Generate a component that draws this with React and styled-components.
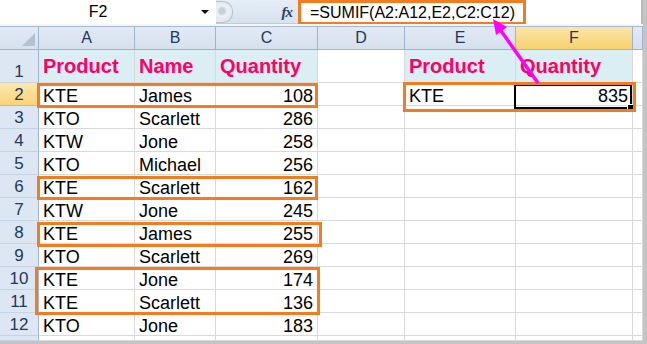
import React from "react";
import styled, { createGlobalStyle, css } from "styled-components";

const GlobalStyle = createGlobalStyle`
  html, body {
    margin: 0;
    padding: 0;
    background: #c4c4c4;
  }
  body {
    font-family: "Liberation Sans", Arial, sans-serif;
  }
`;

const Frame = styled.div`
  position: relative;
  width: 643px;
  height: 341px;
  background: #fff;
  display: flex;
  flex-direction: column;
  overflow: hidden;
`;

/* formula bar */
const FormulaBar = styled.div`
  display: grid;
  grid-template-columns: 216px 82px 1fr;
  height: 24px;
  box-sizing: border-box;
  border-bottom: 1px solid #c3cbd6;
  background: linear-gradient(#e6edf7, #d7e2f0);
`;

const NameBox = styled.div`
  position: relative;
  display: flex;
  align-items: center;
  justify-content: center;
  padding-right: 20px;
  background: #fff;
  font-size: 16px;
  color: #000;
  &::after {
    content: "";
    position: absolute;
    right: 7px;
    top: 10px;
    border-left: 4px solid transparent;
    border-right: 4px solid transparent;
    border-top: 4px solid #000;
  }
`;

const Grip = styled.div`
  display: flex;
  align-items: center;
  justify-content: space-between;
  padding-right: 6px;
`;

const Knob = styled.span`
  width: 18px;
  height: 20px;
  margin-left: -2px;
  border-radius: 0 10px 10px 0;
  border: 1px solid #b6c2d2;
  border-left: none;
  background: radial-gradient(circle at 8px 9px, #c9d0d9 0 3px, #eef2f7 5px, #e2e8f0 10px);
`;

const Fx = styled.span`
  font-family: "Liberation Serif", "Times New Roman", serif;
  font-style: italic;
  font-weight: bold;
  font-size: 15px;
  color: #2d3f57;
  letter-spacing: -1px;
`;

const FormulaField = styled.div`
  background: #fff;
  border-right: 2px solid #b9b9b9;
`;

const FormulaText = styled.span`
  display: inline-flex;
  align-items: center;
  box-sizing: border-box;
  width: 228px;
  height: 24px;
  padding-left: 9px;
  border: 3px solid #f47b20;
  border-bottom-width: 2px;
  font-size: 16px;
  color: #000;
`;

const Strip = styled.div`
  height: 2px;
  background: #f3f5f9;
  border-bottom: 1px solid #a9b9cd;
`;

/* sheet grid */
const Sheet = styled.div`
  flex: 1;
  display: grid;
  grid-template-columns: 39px 96px 81px 102px 87px 111px 117px 1fr;
  grid-template-rows: 23px 33px repeat(11, 23px) 1fr;
`;

const place = css`
  grid-column: ${(p) => p.$c};
  grid-row: ${(p) => p.$r};
`;

const ColHead = styled.div`
  ${place};
  display: flex;
  align-items: center;
  justify-content: center;
  box-sizing: border-box;
  border-right: 1px solid #9fb4cc;
  border-bottom: 1px solid #9fb4cc;
  background: ${(p) =>
    p.$active ? "linear-gradient(#fbe6a8, #f7d26e)" : "linear-gradient(#e1e9f4, #d6e1ee)"};
  font-size: 16px;
  color: #21395a;
`;

const Corner = styled(ColHead)`
  align-items: flex-end;
  justify-content: flex-end;
  padding: 0 3px 3px 0;
  &::after {
    content: "";
    border-left: 13px solid transparent;
    border-bottom: 13px solid #b3c1d3;
  }
`;

const RowHead = styled.div`
  ${place};
  display: flex;
  align-items: flex-end;
  justify-content: center;
  box-sizing: border-box;
  border-right: 1px solid #9fb4cc;
  border-bottom: 1px solid ${(p) => (p.$active ? "#e4b75a" : "#c5d3e3")};
  background: ${(p) => (p.$active ? "linear-gradient(#fde8ae, #f8d378)" : "#dde7f3")};
  font-size: 17px;
  line-height: 20px;
  color: #21395a;
`;

const Cell = styled.div`
  ${place};
  display: flex;
  align-items: ${(p) => (p.$title ? "center" : "flex-end")};
  justify-content: ${(p) => (p.$num ? "flex-end" : "flex-start")};
  box-sizing: border-box;
  padding: ${(p) => (p.$num ? "0 4px 0 0" : "0 0 0 4px")};
  border-right: 1px solid #d9d9d9;
  border-bottom: 1px solid #d9d9d9;
  background: ${(p) => (p.$fill ? "#daeef3" : "#fff")};
  font-size: ${(p) => (p.$title ? "20px" : "18px")};
  font-weight: ${(p) => (p.$title ? "bold" : "normal")};
  line-height: 17px;
  color: ${(p) => (p.$title ? "#ff0066" : "#000")};
  white-space: nowrap;
  overflow: hidden;
`;

const Highlight = styled.div`
  ${place};
  margin: ${(p) => p.$m};
  border: 3px solid #f47b20;
  pointer-events: none;
  z-index: 2;
`;

const Selection = styled.div`
  ${place};
  position: relative;
  margin: 1px 1px -3px -2px;
  border: 2px solid #000;
  z-index: 1;
  &::after {
    content: "";
    position: absolute;
    right: -4px;
    bottom: -4px;
    width: 5px;
    height: 5px;
    background: #000;
    border: 1px solid #fff;
  }
`;

const Arrow = styled.svg`
  position: absolute;
  left: 0;
  top: 0;
  z-index: 5;
  pointer-events: none;
`;

const cols = ["A", "B", "C", "D", "E", "F", "G"];

const data = [
  ["KTE", "James", 108],
  ["KTO", "Scarlett", 286],
  ["KTW", "Jone", 258],
  ["KTO", "Michael", 256],
  ["KTE", "Scarlett", 162],
  ["KTW", "Jone", 245],
  ["KTE", "James", 255],
  ["KTO", "Scarlett", 269],
  ["KTE", "Jone", 174],
  ["KTE", "Scarlett", 136],
  ["KTO", "Jone", 183],
];

// grid rows: 1 = letters, 2 = sheet row 1, 3..13 = sheet rows 2..12, 14 = partial row 13
const boxes = [
  { c: "2 / 5", r: "3", m: "0 0 -2px -2px" },
  { c: "2 / 5", r: "7", m: "1px 0 -2px -2px" },
  { c: "2 / 5", r: "9", m: "1px -4px -3px -2px" },
  { c: "2 / 5", r: "11 / 13", m: "0 -2px -2px -4px" },
  { c: "6 / 8", r: "3", m: "-1px -3px -6px -2px" },
];

const titleRow = ["Product", "Name", "Quantity", "", "Product", "Quantity", ""];

export default function App() {
  const cells = [];

  cells.push(<Corner key="corner" $c="1" $r="1" />);
  cols.forEach((l, i) => {
    cells.push(
      <ColHead key={"h" + l} $c={i + 2} $r="1" $active={l === "F"}>
        {l === "G" ? "" : l}
      </ColHead>
    );
  });

  for (let n = 1; n <= 13; n++) {
    cells.push(
      <RowHead key={"r" + n} $c="1" $r={n + 1} $active={n === 2}>
        {n <= 12 ? n : ""}
      </RowHead>
    );
  }

  titleRow.forEach((t, i) => {
    cells.push(
      <Cell key={"t" + i} $c={i + 2} $r="2" $title $fill={i !== 3 && i !== 6}>
        {t}
      </Cell>
    );
  });

  for (let n = 2; n <= 13; n++) {
    const row = data[n - 2] || ["", "", ""];
    const extra = n === 2 ? ["", "KTE", 835, ""] : ["", "", "", ""];
    [...row, ...extra].forEach((v, i) => {
      cells.push(
        <Cell key={n + "-" + i} $c={i + 2} $r={n + 1} $num={typeof v === "number"}>
          {v}
        </Cell>
      );
    });
  }

  return (
    <>
      <GlobalStyle />
      <Frame>
        <FormulaBar>
          <NameBox>F2</NameBox>
          <Grip>
            <Knob />
            <Fx>fx</Fx>
          </Grip>
          <FormulaField>
            <FormulaText>=SUMIF(A2:A12,E2,C2:C12)</FormulaText>
          </FormulaField>
        </FormulaBar>
        <Strip />
        <Sheet>
          {cells}
          <Selection $c="7" $r="3" />
          {boxes.map((b, i) => (
            <Highlight key={i} $c={b.c} $r={b.r} $m={b.m} />
          ))}
        </Sheet>
        <Arrow width="643" height="341">
          <line x1="538" y1="83" x2="499" y2="28" stroke="#ff00ff" strokeWidth="3.5" />
          <polygon points="493,19 507,27 496,35" fill="#ff00ff" />
        </Arrow>
      </Frame>
    </>
  );
}
